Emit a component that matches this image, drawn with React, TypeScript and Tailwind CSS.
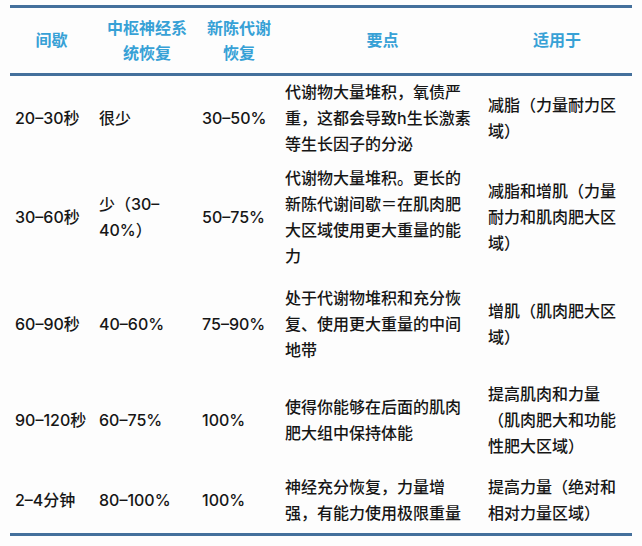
import React from "react";

// Rest interval table: each row has explicit line breaks to match the source layout
type Row = {
  h: string;
  rest: string[];
  cns: string[];
  meta: string[];
  points: string[];
  use: string[];
};

const ROWS: Row[] = [
  {
    h: "h-[84px]",
    rest: ["20–30秒"],
    cns: ["很少"],
    meta: ["30–50%"],
    points: ["代谢物大量堆积，氧债严", "重，这都会导致h生长激素", "等生长因子的分泌"],
    use: ["减脂（力量耐力区", "域）"],
  },
  {
    h: "h-[114px]",
    rest: ["30–60秒"],
    cns: ["少（30–", "40%）"],
    meta: ["50–75%"],
    points: ["代谢物大量堆积。更长的", "新陈代谢间歇＝在肌肉肥", "大区域使用更大重量的能", "力"],
    use: ["减脂和增肌（力量", "耐力和肌肉肥大区", "域）"],
  },
  {
    h: "h-[100px]",
    rest: ["60–90秒"],
    cns: ["40–60%"],
    meta: ["75–90%"],
    points: ["处于代谢物堆积和充分恢", "复、使用更大重量的中间", "地带"],
    use: ["增肌（肌肉肥大区", "域）"],
  },
  {
    h: "h-[92px]",
    rest: ["90–120秒"],
    cns: ["60–75%"],
    meta: ["100%"],
    points: ["使得你能够在后面的肌肉", "肥大组中保持体能"],
    use: ["提高肌肉和力量", "（肌肉肥大和功能", "性肥大区域）"],
  },
  {
    h: "h-[67px]",
    rest: ["2–4分钟"],
    cns: ["80–100%"],
    meta: ["100%"],
    points: ["神经充分恢复，力量增", "强，有能力使用极限重量"],
    use: ["提高力量（绝对和", "相对力量区域）"],
  },
];

const GRID = "grid grid-cols-[83px_108px_76px_211px_144px]";

function Lines({ lines }: { lines: string[] }) {
  return (
    <div>
      {lines.map((l, i) => (
        <div key={i} className="whitespace-nowrap">
          {l}
        </div>
      ))}
    </div>
  );
}

export default function App() {
  return (
    <div
      className="w-[642px] h-[546px] bg-[#fdfdfd] pt-[5px] px-[10px] text-[#161616] text-[16px] leading-[26px] font-medium"
      style={{ fontFamily: '"Inter", "Noto Sans CJK SC", sans-serif' }}
    >
      <div className="w-[622px] border-y-[3px] border-[#44709c]">
        {/* header */}
        <div className={`${GRID} h-[68px] items-center border-b-[3px] border-[#44709c] text-[#37a1d6] font-bold leading-[25px] text-center`}>
          <div>间歇</div>
          <div>
            中枢神经系
            <br />
            统恢复
          </div>
          <div>
            新陈代谢
            <br />
            恢复
          </div>
          <div>要点</div>
          <div className="pr-[6px]">适用于</div>
        </div>

        {/* body */}
        {ROWS.map((r, i) => (
          <div key={i} className={`${GRID} ${r.h} items-center`}>
            <div className="pl-[5px]">
              <Lines lines={r.rest} />
            </div>
            <div className="pl-[6px]">
              <Lines lines={r.cns} />
            </div>
            <div className="pl-[1px]">
              <Lines lines={r.meta} />
            </div>
            <div className="pl-[8px]">
              <Lines lines={r.points} />
            </div>
            <div>
              <Lines lines={r.use} />
            </div>
          </div>
        ))}
      </div>
    </div>
  );
}
